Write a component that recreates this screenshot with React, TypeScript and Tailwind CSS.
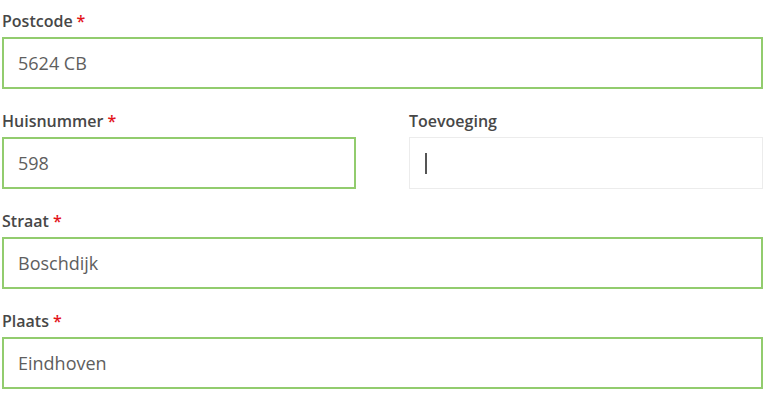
import React from "react";

function Label({ text, required }: { text: string; required?: boolean }) {
  return (
    <label className="block h-6 leading-6 mb-1 text-[16px] font-semibold text-[#474747]">
      {text}
      {required && <span className="text-[#e3141b] ml-1">*</span>}
    </label>
  );
}

function Field({ value, valid = true, caret }: { value?: string; valid?: boolean; caret?: boolean }) {
  return (
    <div
      className={
        valid
          ? "h-[52px] border-2 border-[#92cc6e] bg-white flex items-center px-[14px]"
          : "h-[52px] border border-[#ececec] bg-white flex items-center px-[15px]"
      }
    >
      {caret ? (
        <span className="block w-[2px] h-[21px] bg-[#555555]" />
      ) : (
        <span className="text-[18px] text-[#5e5e5e] leading-none">{value}</span>
      )}
    </div>
  );
}

export default function App() {
  return (
    <div
      className="w-[768px] h-[405px] bg-white pl-[2px] pr-[5px] pt-[9px]"
      style={{ fontFamily: '"Open Sans", "Noto Sans", sans-serif' }}
    >
      <div className="mb-5">
        <Label text="Postcode" required />
        <Field value="5624 CB" />
      </div>

      <div className="mb-5 grid grid-cols-2 gap-x-[53px]">
        <div>
          <Label text="Huisnummer" required />
          <Field value="598" />
        </div>
        <div>
          <Label text="Toevoeging" />
          <Field valid={false} caret />
        </div>
      </div>

      <div className="mb-5">
        <Label text="Straat" required />
        <Field value="Boschdijk" />
      </div>

      <div>
        <Label text="Plaats" required />
        <Field value="Eindhoven" />
      </div>
    </div>
  );
}
